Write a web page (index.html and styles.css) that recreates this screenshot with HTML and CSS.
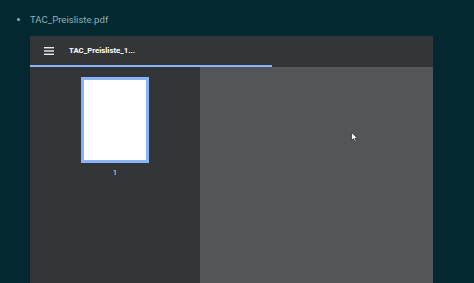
FILE: index.html
```html
<!DOCTYPE html>
<html>
<head><meta charset="utf-8"/>
<title>TAC_Preisliste.pdf</title>
<link rel="stylesheet" href="styles.css">
</head>
<body>
<ul class="attachments">
    <li>TAC_Preisliste.pdf</li>
</ul>
<div class="viewer">
    <div class="toolbar">
        <svg class="menu" width="10" height="8" viewBox="0 0 10 8">
            <rect x="0" y="0" width="10" height="1.4" fill="#e8eaed"></rect>
            <rect x="0" y="3.3" width="10" height="1.4" fill="#e8eaed"></rect>
            <rect x="0" y="6.6" width="10" height="1.4" fill="#e8eaed"></rect>
        </svg>
        <span class="title">TAC_Preisliste_1...</span>
    </div>
    <div class="progress"><div class="progress-bar"></div></div>
    <div class="content">
        <div class="sidebar">
            <div class="thumb"></div>
            <div class="pagenum">1</div>
        </div>
        <div class="main">
            <!-- mouse pointer left over the page -->
            <svg class="cursor" width="8" height="11" viewBox="0 0 8 11">
                <path d="M0.5 0.5 L0.5 8.5 L2.5 6.6 L4 10 L5.3 9.4 L3.9 6.2 L6.6 6.2 Z" fill="#ffffff" stroke="#222" stroke-width="0.7"></path>
            </svg>
        </div>
    </div>
</div>
</body>
</html>
```
FILE: styles.css
```css
body { margin: 0px; border: 0px; padding: 0px; background: #03282f; overflow: hidden; }

.attachments {
    margin: 0;
    padding: 12px 0 0 30px;
    font-family: Roboto, "Liberation Sans", sans-serif;
    font-size: 9.6px;
    line-height: 15px;
    color: #8db2b8;
}

.viewer {
    margin: 9px 0 0 30px;
    width: 403px;
    height: 260px;
    display: flex;
    flex-direction: column;
    background: #323639;
}

.toolbar {
    height: 29px;
    display: flex;
    align-items: center;
    padding-left: 14px;
    background: #323639;
}

.menu { margin-right: 15px; }

.title {
    font-family: Roboto, "Liberation Sans", sans-serif;
    font-weight: bold;
    font-size: 7.8px;
    color: #ffffff;
}

.progress { height: 2px; background: #323639; }
.progress-bar { width: 242px; height: 2px; background: #8ab4f8; }

.content {
    flex: 1;
    display: flex;
}

.sidebar {
    width: 170px;
    background: #323639;
    display: flex;
    flex-direction: column;
    align-items: center;
    padding-top: 10px;
}

.thumb {
    width: 62px;
    height: 80px;
    background: #ffffff;
    border: 3px solid #8ab4f8;
}

.pagenum {
    margin-top: 6px;
    font-family: Roboto, "Liberation Sans", sans-serif;
    font-size: 7px;
    color: #e8eaed;
}

.main {
    flex: 1;
    background: #525659;
    position: relative;
}

.cursor {
    position: absolute;
    left: 151px;
    top: 65px;
}
```
